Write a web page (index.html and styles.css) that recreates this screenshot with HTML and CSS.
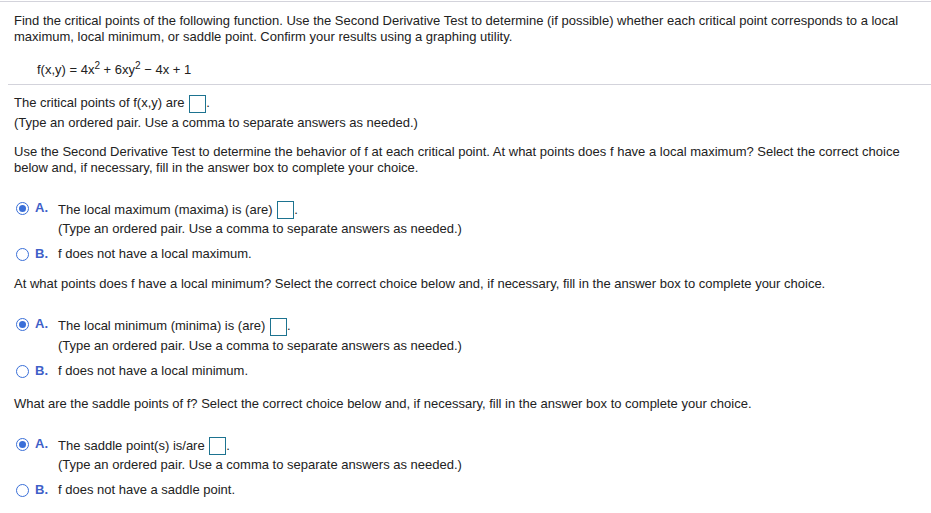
FILE: index.html
```html
<!DOCTYPE html>
<html>
<head>
	<meta charset="UTF-8">
	<title>Second Derivative Test</title>
	<link rel="stylesheet" href="styles.css">
</head>
<body>
	<div class="question">
		<div class="prompt">
			<p class="intro">Find the critical points of the following function. Use the Second Derivative Test to determine (if possible) whether each critical point corresponds to a local maximum, local minimum, or saddle point. Confirm your results using a graphing utility.</p>
			<p class="formula">f(x,y) = 4x<sup>2</sup> + 6xy<sup>2</sup> &minus; 4x + 1</p>
		</div>
		<div class="work">
			<p class="line">The critical points of f(x,y) are <span class="answerBox"></span>.</p>
			<p class="line hint">(Type an ordered pair. Use a comma to separate answers as needed.)</p>

			<p class="part first">Use the Second Derivative Test to determine the behavior of f at each critical point. At what points does f have a local maximum? Select the correct choice below and, if necessary, fill in the answer box to complete your choice.</p>
			<ul class="choices">
				<li class="choice">
					<span class="radio checked"></span><span class="letter">A.</span>
					<div class="choiceText">
						<div>The local maximum (maxima) is (are) <span class="answerBox"></span>.</div>
						<div class="hint">(Type an ordered pair. Use a comma to separate answers as needed.)</div>
					</div>
				</li>
				<li class="choice">
					<span class="radio"></span><span class="letter">B.</span>
					<div class="choiceText">f does not have a local maximum.</div>
				</li>
			</ul>

			<p class="part">At what points does f have a local minimum? Select the correct choice below and, if necessary, fill in the answer box to complete your choice.</p>
			<ul class="choices">
				<li class="choice">
					<span class="radio checked"></span><span class="letter">A.</span>
					<div class="choiceText">
						<div>The local minimum (minima) is (are) <span class="answerBox"></span>.</div>
						<div class="hint">(Type an ordered pair. Use a comma to separate answers as needed.)</div>
					</div>
				</li>
				<li class="choice">
					<span class="radio"></span><span class="letter">B.</span>
					<div class="choiceText">f does not have a local minimum.</div>
				</li>
			</ul>

			<p class="part saddle">What are the saddle points of f? Select the correct choice below and, if necessary, fill in the answer box to complete your choice.</p>
			<ul class="choices">
				<li class="choice">
					<span class="radio checked"></span><span class="letter">A.</span>
					<div class="choiceText">
						<div>The saddle point(s) is/are <span class="answerBox"></span>.</div>
						<div class="hint">(Type an ordered pair. Use a comma to separate answers as needed.)</div>
					</div>
				</li>
				<li class="choice">
					<span class="radio"></span><span class="letter">B.</span>
					<div class="choiceText">f does not have a saddle point.</div>
				</li>
			</ul>
		</div>
	</div>
</body>
</html>
```

FILE: styles.css
```css
body {
	margin: 0;
	padding: 0;
	background-color: #fff;
	color: #222;
	font-family: "Liberation Sans", Arial, sans-serif;
	font-size: 13px;
	line-height: 16px;
}
p {
	margin: 0;
}
.question {
	border-top: 1px solid #d3d3db;
	margin-top: 1px;
}
.prompt {
	padding: 11px 14px 6px 14px;
}
.formula {
	margin-top: 17px;
	padding-left: 23px;
}
.formula sup {
	font-size: 10px;
	line-height: 0;
	vertical-align: 5px;
}
.work {
	margin-left: 8px;
	border-top: 1px solid #d3d3db;
	padding: 8px 6px 0 6px;
}
.line {
	line-height: 19px;
}
.part {
	margin-top: 14px;
}
.part.first {
	margin-top: 12px;
}
.part.saddle {
	margin-top: 17px;
}
.choices {
	list-style: none;
	margin: 24px 0 4px 0;
	padding: 0;
}
.choice {
	display: flex;
	align-items: flex-start;
	margin-bottom: 8px;
}
.choice:last-child {
	margin-bottom: 0;
}
.radio {
	box-sizing: border-box;
	width: 13px;
	height: 13px;
	margin: 2px 0 0 2px;
	border: 1px solid #3a6fd8;
	border-radius: 50%;
	flex: none;
	display: flex;
	align-items: center;
	justify-content: center;
}
.radio.checked::after {
	content: "";
	width: 7px;
	height: 7px;
	border-radius: 50%;
	background-color: #3a6fd8;
}
.letter {
	color: #3f5fc8;
	font-weight: bold;
	width: 23px;
	margin-left: 6px;
	flex: none;
}
.choiceText > div {
	line-height: 19px;
}
.answerBox {
	display: inline-block;
	box-sizing: border-box;
	width: 17px;
	height: 18px;
	margin-left: 1px;
	border: 1px solid #1d7390;
	vertical-align: middle;
}
```
